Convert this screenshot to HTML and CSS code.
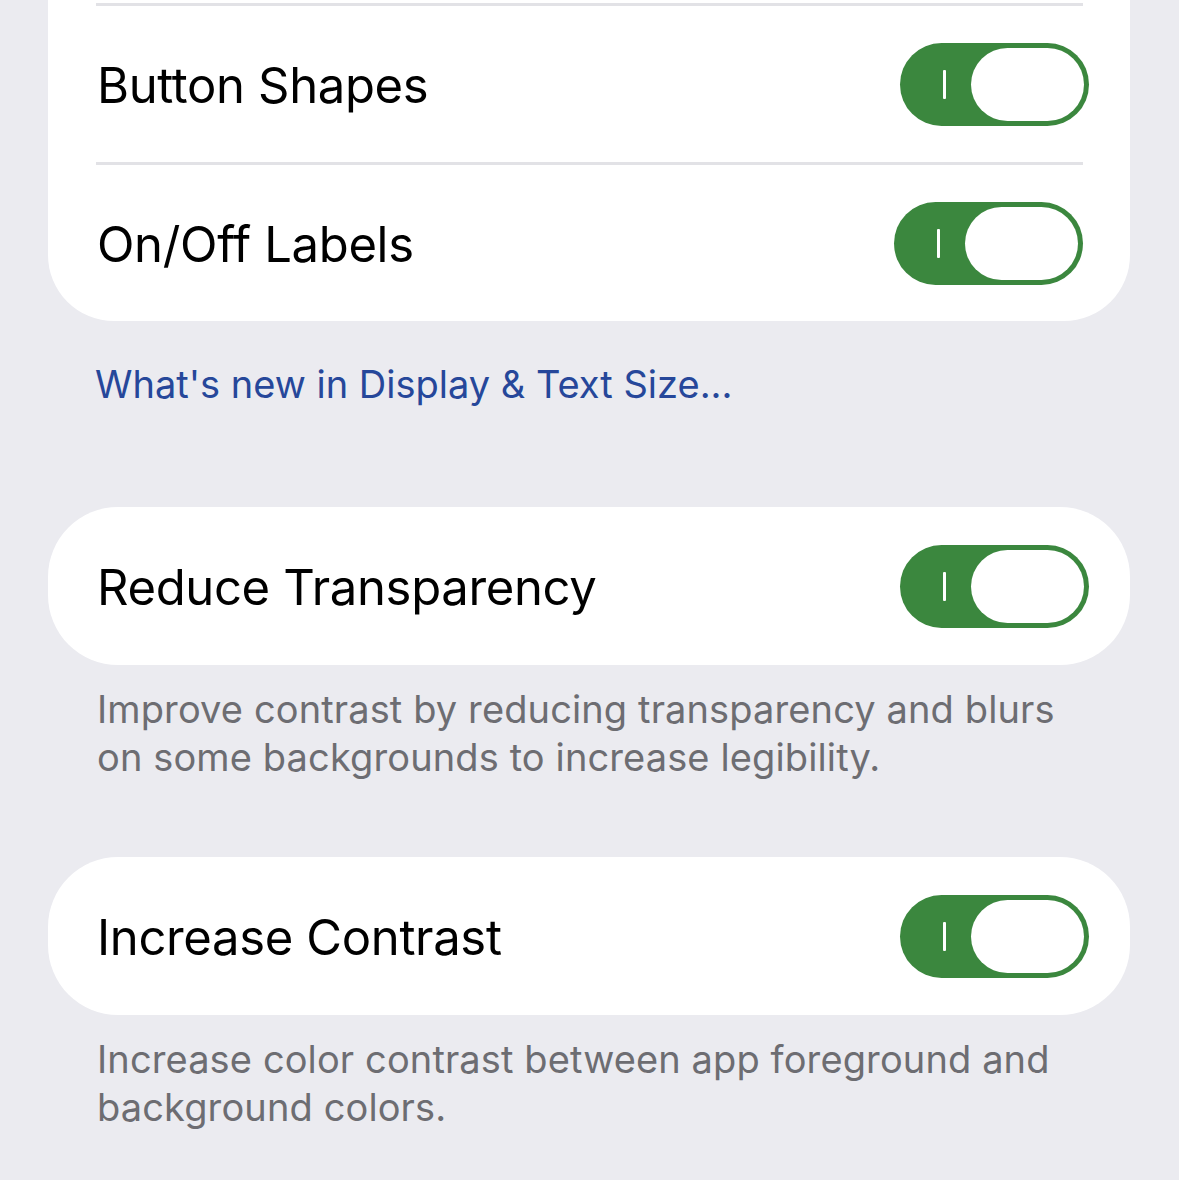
FILE: index.html
```html
<!DOCTYPE html>
<html lang="en">
<head>
<meta charset="utf-8">
<title>Display &amp; Text Size</title>
<link rel="stylesheet" href="styles.css">
</head>
<body>
<div class="page">
  <section class="card card-top">
    <div class="row">
      <span class="label">Button Shapes</span>
      <span class="toggle"><span class="on-mark"></span><span class="knob"></span></span>
    </div>
    <div class="row">
      <span class="label">On/Off Labels</span>
      <span class="toggle toggle-shift"><span class="on-mark"></span><span class="knob"></span></span>
    </div>
  </section>
  <a class="link" href="#">What's new in Display &amp; Text Size...</a>

  <section class="card card-single">
    <div class="row row-single">
      <span class="label">Reduce Transparency</span>
      <span class="toggle"><span class="on-mark"></span><span class="knob"></span></span>
    </div>
  </section>
  <p class="footer">Improve contrast by reducing transparency and blurs on some backgrounds to increase legibility.</p>

  <section class="card card-single">
    <div class="row row-single">
      <span class="label">Increase Contrast</span>
      <span class="toggle"><span class="on-mark"></span><span class="knob"></span></span>
    </div>
  </section>
  <p class="footer">Increase color contrast between app foreground and background colors.</p>
</div>
</body>
</html>
```

FILE: styles.css
```css
html, body {
  margin: 0;
  padding: 0;
  background: #ebebf0;
}
body {
  width: 1179px;
  height: 1180px;
  overflow: hidden;
  font-family: "Inter", "Liberation Sans", sans-serif;
  -webkit-font-smoothing: antialiased;
}
.page {
  display: flex;
  flex-direction: column;
}
.card {
  background: #ffffff;
  margin: 0 49px 0 48px;
}
.card-top {
  border-radius: 0 0 66px 66px;
  padding-top: 3px;
}
.card-single {
  border-radius: 70px;
}
.row {
  display: flex;
  align-items: center;
  justify-content: space-between;
  height: 156px;
  margin-left: 48px;
  border-top: 3px solid #e2e2e6;
  margin-right: 47px;
}
.row-single {
  border-top: none;
  height: 158px;
}
.label {
  font-size: 49px;
  color: #000;
  letter-spacing: -0.35px;
  margin-left: 1px;
  padding-top: 2px;
}
.toggle {
  width: 189px;
  height: 83px;
  box-sizing: border-box;
  border-radius: 42px;
  background: #3b873e;
  display: flex;
  align-items: center;
  justify-content: space-between;
  padding: 5px;
  margin-right: -6px;
}
.toggle-shift {
  margin-right: 0;
}
.on-mark {
  width: 3px;
  height: 29px;
  background: #ffffff;
  border-radius: 1px;
  margin-left: 38px;
}
.knob {
  width: 113px;
  height: 73px;
  border-radius: 37px;
  background: #ffffff;
}
.link {
  display: block;
  color: #26479a;
  text-decoration: none;
  font-size: 38px;
  margin: 38px 0 0 95px;
  line-height: 50px;
  height: 148px;
}
.footer {
  margin: 20px 100px 0 97px;
  font-size: 38px;
  line-height: 48px;
  letter-spacing: 0.12px;
  color: #6d6d72;
  height: 172px;
}
```
